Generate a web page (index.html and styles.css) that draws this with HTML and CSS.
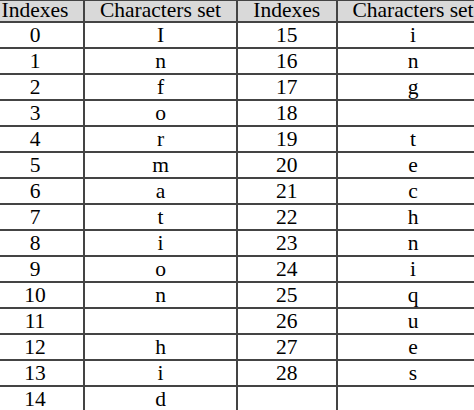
FILE: index.html
```html
<!DOCTYPE html>
<html>
<head>
<meta charset="utf-8">
<link rel="stylesheet" href="styles.css">
</head>
<body>
<table class="chars">
  <colgroup>
    <col class="c1">
    <col class="c2">
    <col class="c3">
    <col class="c4">
  </colgroup>
  <thead>
    <tr><th>Indexes</th><th>Characters set</th><th>Indexes</th><th>Characters set</th></tr>
  </thead>
  <tbody>
    <tr><td>0</td><td>I</td><td>15</td><td>i</td></tr>
    <tr><td>1</td><td>n</td><td>16</td><td>n</td></tr>
    <tr><td>2</td><td>f</td><td>17</td><td>g</td></tr>
    <tr><td>3</td><td>o</td><td>18</td><td></td></tr>
    <tr><td>4</td><td>r</td><td>19</td><td>t</td></tr>
    <tr><td>5</td><td>m</td><td>20</td><td>e</td></tr>
    <tr><td>6</td><td>a</td><td>21</td><td>c</td></tr>
    <tr><td>7</td><td>t</td><td>22</td><td>h</td></tr>
    <tr><td>8</td><td>i</td><td>23</td><td>n</td></tr>
    <tr><td>9</td><td>o</td><td>24</td><td>i</td></tr>
    <tr><td>10</td><td>n</td><td>25</td><td>q</td></tr>
    <tr><td>11</td><td></td><td>26</td><td>u</td></tr>
    <tr><td>12</td><td>h</td><td>27</td><td>e</td></tr>
    <tr><td>13</td><td>i</td><td>28</td><td>s</td></tr>
    <tr><td>14</td><td>d</td><td></td><td></td></tr>
  </tbody>
</table>
</body>
</html>
```
FILE: styles.css
```css
html, body {
  margin: 0;
  padding: 0;
  background: #ffffff;
  overflow: hidden;
}
body {
  width: 474px;
  height: 410px;
}
.chars {
  border-collapse: collapse;
  table-layout: fixed;
  width: 503.5px;
  margin-left: -15px;
  margin-top: -1px;
  font-family: "Liberation Serif", "Times New Roman", serif;
  font-size: 21.5px;
  color: #000;
}
.c1 { width: 98px; }
.c2 { width: 153px; }
.c3 { width: 99.5px; }
.c4 { width: 153px; }
.chars th, .chars td {
  border: 2px solid #444444;
  padding: 0;
  font-weight: normal;
  white-space: nowrap;
  text-align: center;
}
.chars th {
  background: #d9d9d9;
  line-height: 18px;
  padding-bottom: 2px;
}
.chars td {
  line-height: 24px;
  height: 24px;
}
```
